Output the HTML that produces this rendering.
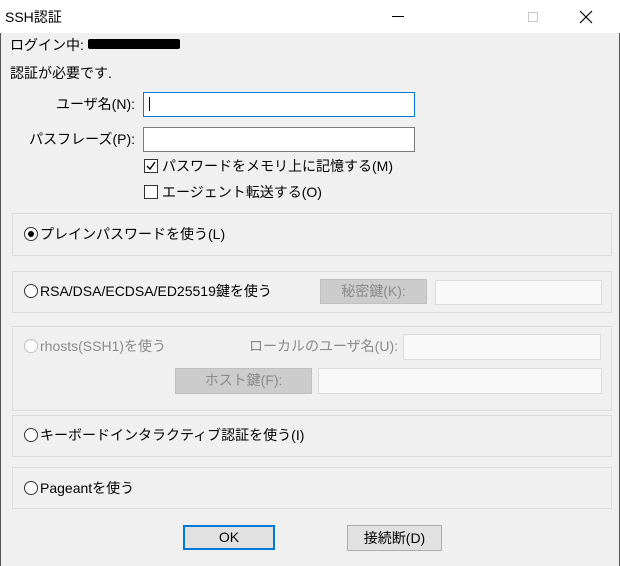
<!DOCTYPE html><html><head><meta charset="utf-8"><style>
*{margin:0;padding:0;box-sizing:border-box}
body{width:620px;height:566px;background:#f0f0f0;font-family:"Liberation Sans","Noto Sans CJK JP",sans-serif;font-size:14px;color:#000;position:relative;overflow:hidden}
.a{position:absolute;white-space:nowrap;line-height:16px}
.r{position:absolute;white-space:nowrap;line-height:16px;text-align:right}
.box{position:absolute;border:1px solid #dcdcdc;left:12px;width:600px}
.in{position:absolute;background:#fff;border:1px solid #7a7a7a}
.dis{position:absolute;background:#f9f9f9;border:1px solid #dcdcdc}
.btn{position:absolute;background:#cccccc;border:1px solid #bfbfbf;color:#8a8a8a;text-align:center;line-height:23px}
.rad{position:absolute;width:14px;height:14px;border:1px solid #333;border-radius:50%;background:#fff}
.cb{position:absolute;width:14px;height:14px;border:1px solid #333;background:#fff}
</style></head><body>
<div style="position:absolute;left:0;top:0;width:620px;height:33px;background:#fff"></div>
<div class="a" style="left:5px;top:9px;font-size:14px">SSH認証</div>
<div style="position:absolute;left:392px;top:16px;width:12px;height:1px;background:#000"></div>
<div style="position:absolute;left:528px;top:12px;width:10px;height:10px;border:1px solid #c8c8c8"></div>
<svg style="position:absolute;left:579px;top:10px" width="14" height="14"><path d="M1 1L13 13M13 1L1 13" stroke="#000" stroke-width="1.2"/></svg>
<div style="position:absolute;left:0;top:33px;width:1px;height:533px;background:#555"></div>
<div style="position:absolute;left:619px;top:33px;width:1px;height:533px;background:#555"></div>
<div class="a" style="left:10px;top:37px">ログイン中:</div>
<div style="position:absolute;left:88px;top:39px;width:92px;height:10px;background:#000;border-radius:2px"></div>
<div class="a" style="left:10px;top:65px">認証が必要です.</div>
<div class="r" style="right:485px;top:96px">ユーザ名(N):</div>
<div class="in" style="left:143px;top:92px;width:272px;height:25px;border-color:#0078d7"></div>
<div style="position:absolute;left:149px;top:97px;width:1px;height:14px;background:#000"></div>
<div class="r" style="right:485px;top:131px">パスフレーズ(P):</div>
<div class="in" style="left:143px;top:127px;width:272px;height:25px"></div>
<div class="cb" style="left:144px;top:159px"></div>
<svg style="position:absolute;left:145px;top:160px" width="12" height="12"><path d="M2 6L5 9L10 2" stroke="#000" stroke-width="1.4" fill="none"/></svg>
<div class="a" style="left:162px;top:158px">パスワードをメモリ上に記憶する(M)</div>
<div class="cb" style="left:144px;top:185px"></div>
<div class="a" style="left:162px;top:184px">エージェント転送する(O)</div>

<div class="box" style="top:213px;height:43px"></div>
<div class="rad" style="left:24px;top:227px"></div><div style="position:absolute;left:28px;top:231px;width:6px;height:6px;border-radius:50%;background:#000"></div>
<div class="a" style="left:40px;top:226px">プレインパスワードを使う(L)</div>

<div class="box" style="top:271px;height:42px"></div>
<div class="rad" style="left:24px;top:284px"></div>
<div class="a" style="left:40px;top:283px">RSA/DSA/ECDSA/ED25519鍵を使う</div>
<div class="btn" style="left:320px;top:279px;width:107px;height:25px">秘密鍵(K):</div>
<div class="dis" style="left:435px;top:280px;width:167px;height:25px"></div>

<div class="box" style="top:326px;height:85px"></div>
<div class="rad" style="left:24px;top:339px;border-color:#c0c0c0"></div>
<div class="a" style="left:40px;top:338px;color:#8a8a8a">rhosts(SSH1)を使う</div>
<div class="r" style="right:222px;top:338px;color:#8a8a8a">ローカルのユーザ名(U):</div>
<div class="dis" style="left:403px;top:334px;width:198px;height:26px"></div>
<div class="btn" style="left:175px;top:368px;width:137px;height:26px">ホスト鍵(F):</div>
<div class="dis" style="left:318px;top:368px;width:284px;height:26px"></div>

<div class="box" style="top:415px;height:42px"></div>
<div class="rad" style="left:24px;top:428px"></div>
<div class="a" style="left:40px;top:427px">キーボードインタラクティブ認証を使う(I)</div>

<div class="box" style="top:467px;height:42px"></div>
<div class="rad" style="left:24px;top:481px"></div>
<div class="a" style="left:40px;top:480px">Pageantを使う</div>

<div style="position:absolute;left:183px;top:525px;width:92px;height:25px;border:2px solid #0078d7;background:#e1e1e1;text-align:center;line-height:21px">OK</div>
<div style="position:absolute;left:347px;top:525px;width:95px;height:26px;border:1px solid #adadad;background:#e1e1e1;text-align:center;line-height:24px">接続断(D)</div>
</body></html>
